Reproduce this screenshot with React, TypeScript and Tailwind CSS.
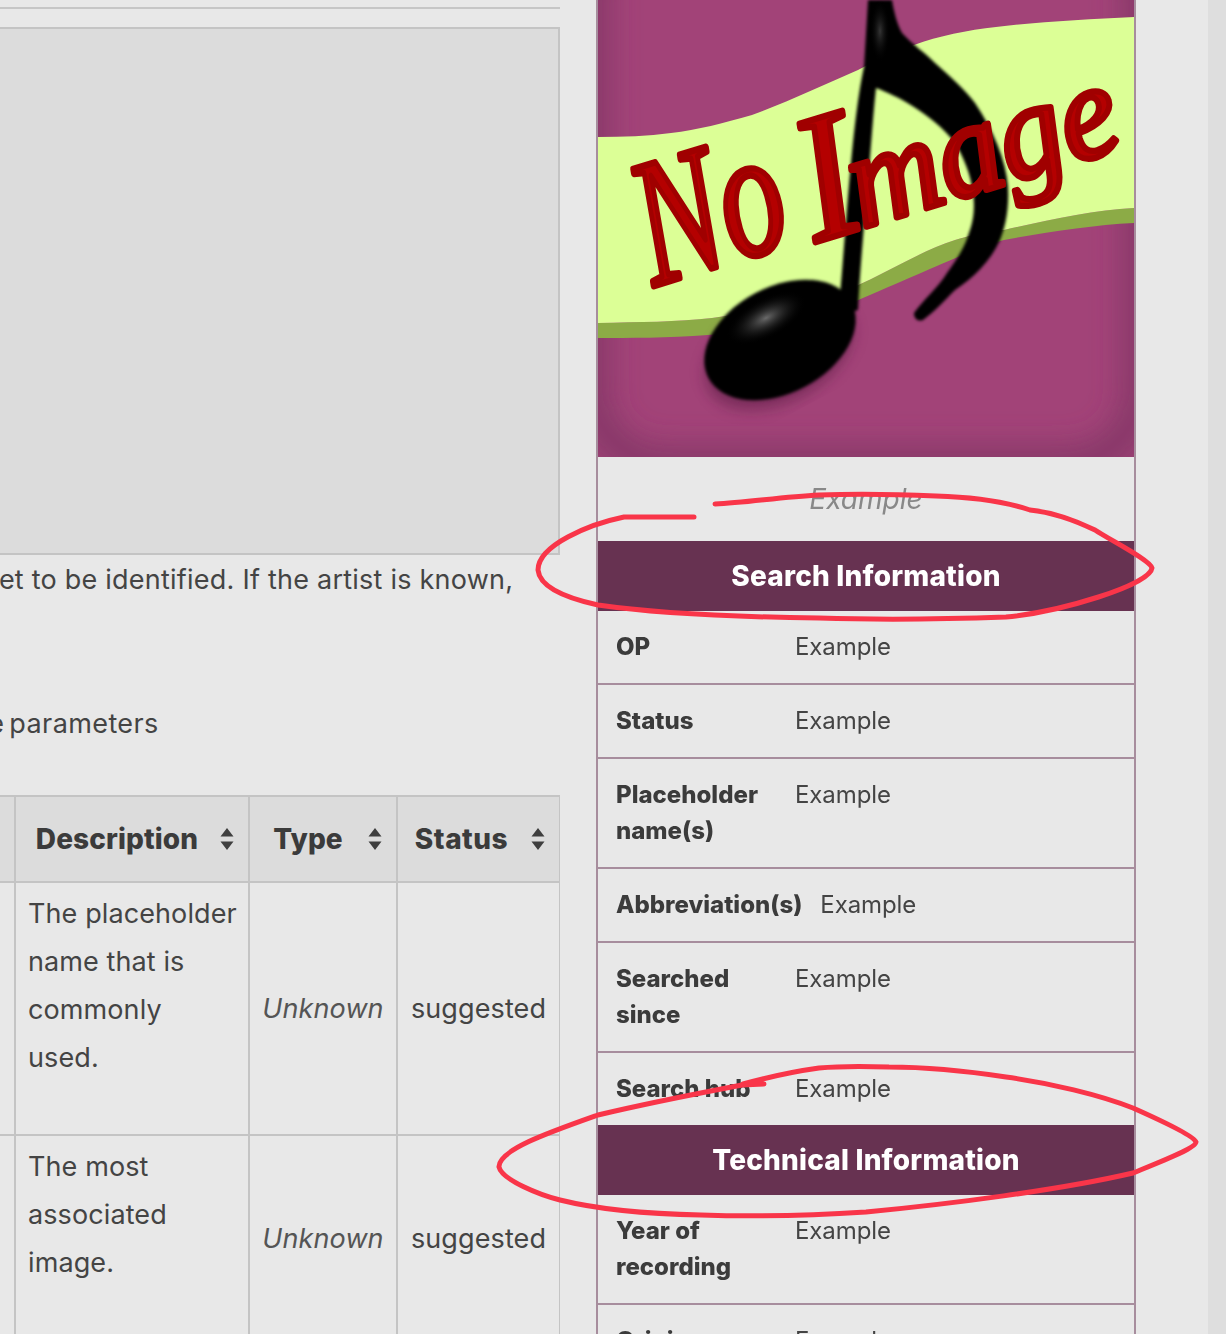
import React from 'react';

const bodyFont = "font-['Inter','Noto_Sans',sans-serif]";

const SortIcon = () => (
  <svg className="absolute right-[14px] top-[30px]" width="14" height="24" viewBox="0 0 14 24">
    <path d="M7 1 L13.5 9.5 H0.5 Z M7 23 L0.5 14.5 H13.5 Z" fill="#3f3f3f" />
  </svg>
);

const NoImage = () => (
  <svg width="536" height="457" viewBox="0 0 536 457" className="block">
    <defs>
      <radialGradient id="shine" cx="50%" cy="50%" r="50%">
        <stop offset="0%" stopColor="#6a6a6a" />
        <stop offset="100%" stopColor="#000000" stopOpacity="0" />
      </radialGradient>
      <filter id="soft"><feGaussianBlur stdDeviation="1.5" /></filter>
      <filter id="shadow"><feGaussianBlur stdDeviation="7" /></filter>
      <filter id="edge"><feGaussianBlur stdDeviation="16" /></filter>
    </defs>
    <rect width="536" height="457" fill="#a24378" />
    <rect x="-6" y="-85" width="548" height="548" rx="70" stroke="#7e3664" strokeWidth="26" fill="none" filter="url(#edge)" />
    <path d="M0 323 C40 322 80 322 114 318 C170 310 215 305 256 287 C290 272 325 250 357 240 C385 232 400 230 406 230 C450 220 495 210 536 208 V223 C495 225 450 232 406 240 C385 245 330 270 256 302 C210 320 160 332 110 335 C70 338 30 338 0 338 Z" fill="#8cab46" />
    <path d="M0 137 C25 137 50 136 73 133 C100 130 125 123 154 115 C190 102 225 85 260 70 C280 60 295 52 316 45 C340 36 370 30 398 27 C440 22 490 19 536 17 V208 C495 210 450 220 406 230 C400 230 385 232 357 240 C325 250 290 272 256 287 C215 305 170 310 114 318 C80 322 40 322 0 323 Z" fill="#dcff96" />
    <ellipse cx="181" cy="352" rx="80" ry="50" transform="rotate(-28 181 352)" fill="#5b1f45" opacity="0.55" filter="url(#shadow)" />
    <g filter="url(#soft)">
      <path d="M270 0 H294 C296 12 299 24 304 33 C315 45 326 52 337 63 C352 76 367 90 377 103 C395 130 408 160 410 187 C411 208 408 225 402 240 C392 262 375 278 357 290 C346 301 336 312 325 320 C320 322 316 319 316 313 C325 300 340 288 349 273 C360 258 367 246 371 233 C376 220 377 206 375 193 C373 175 366 158 357 143 C345 127 330 116 316 107 C302 98 289 92 278 88 C274 125 272 165 268 200 C265 240 262 270 260 310 L240 315 C246 270 252 130 266 67 Z" fill="#050505" />
      <ellipse cx="182" cy="340" rx="81" ry="53" transform="rotate(-28 182 340)" fill="#020202" />
    </g>
    <ellipse cx="168" cy="318" rx="44" ry="20" transform="rotate(-28 168 318)" fill="url(#shine)" />
    <rect x="272" y="0" width="20" height="62" fill="url(#shine)" opacity="0.5" />
    <g fontFamily="'Liberation Serif', serif" fontStyle="italic" fill="#b40000" stroke="#a00000" strokeWidth="5.5" strokeLinejoin="round">
      <text transform="translate(56 286) rotate(-17) scale(0.85 1.2)" fontSize="150">No</text>
      <text transform="translate(218 242) rotate(-17) scale(1.08 1.14)">
        <tspan fontSize="158">I</tspan>
        <tspan fontSize="118" dx="-8">mage</tspan>
      </text>
    </g>
  </svg>
);

const InfoRow = ({ label, auto, last }: { label: string; auto?: boolean; last?: boolean }) => (
  <div className={`flex py-[18px] text-[24px] leading-[36px] ${last ? '' : 'border-b-2 border-[#a78d9d]'}`}>
    <div className={`pl-[18px] pr-[18px] shrink-0 font-extrabold text-[#3b3b3b] ${auto ? '' : 'w-[197px]'}`}>{label}</div>
    <div className="text-[#444444] tracking-[-0.1px]">Example</div>
  </div>
);

const Title = ({ children }: { children: React.ReactNode }) => (
  <div className="h-[70px] bg-[#673251] flex items-center justify-center text-white font-extrabold tracking-[0.2px] text-[28px]">{children}</div>
);

export default function App() {
  return (
    <div className={`relative h-[1334px] w-[1226px] overflow-hidden bg-[#e8e8e8] flex ${bodyFont}`}>
      {/* left column, runs off the left side of the shot */}
      <div className="w-[560px] shrink-0 overflow-hidden pt-[7px]">
        <div className="h-[2px] bg-[#c6c6c6]" />
        <div className="mt-[18px] h-[528px] -ml-[4px] border-2 border-[#c4c4c4] bg-[#dcdcdc]" />
        <p className="mt-[1px] -ml-[16px] whitespace-nowrap text-[27px] leading-[48px] tracking-[0.23px] text-[#444444]">yet to be identified. If the artist is known,</p>
        <p className="mt-[96px] -ml-[46px] whitespace-nowrap text-[27px] leading-[48px] tracking-[0.4px] [word-spacing:-3px] text-[#444444]">The parameters</p>
        <table className="mt-[47px] -ml-[101px] w-[660px] table-fixed border-collapse text-[27px] leading-[48px] tracking-[0.1px] text-[#444444]">
          <colgroup>
            <col className="w-[115px]" />
            <col className="w-[234px]" />
            <col className="w-[148px]" />
            <col className="w-[163px]" />
          </colgroup>
          <thead>
            <tr className="h-[86px] bg-[#dcdcdc] text-[#3b3b3b] text-[28px]">
              <th className="border-2 border-[#c4c4c4]" />
              <th className="relative border-2 border-[#c4c4c4] pr-[30px] font-extrabold">Description<SortIcon /></th>
              <th className="relative border-2 border-[#c4c4c4] pr-[30px] font-extrabold">Type<SortIcon /></th>
              <th className="relative border-2 border-[#c4c4c4] pr-[34px] font-extrabold tracking-[0.5px]">Status<SortIcon /></th>
            </tr>
          </thead>
          <tbody>
            <tr className="h-[253px]">
              <td className="border-2 border-[#c4c4c4]" />
              <td className="border-2 border-[#c4c4c4] align-top pl-[12px] pt-[7px]">The placeholder<br />name that is<br />commonly<br />used.</td>
              <td className="border-2 border-[#c4c4c4] text-center italic text-[#555555]">Unknown</td>
              <td className="border-2 border-[#c4c4c4] text-center">suggested</td>
            </tr>
            <tr className="h-[208px]">
              <td className="border-2 border-[#c4c4c4]" />
              <td className="border-2 border-[#c4c4c4] align-top pl-[12px] pt-[7px]">The most<br />associated<br />image.</td>
              <td className="border-2 border-[#c4c4c4] text-center italic text-[#555555]">Unknown</td>
              <td className="border-2 border-[#c4c4c4] text-center">suggested</td>
            </tr>
          </tbody>
        </table>
      </div>

      {/* infobox */}
      <div className="ml-[36px] w-[540px] shrink-0 border-x-2 border-[#a78d9d]">
        <NoImage />
        <div className="h-[84px] flex items-center justify-center italic text-[28px] text-[#888888]">Example</div>
        <Title>Search Information</Title>
        <InfoRow label="OP" />
        <InfoRow label="Status" />
        <InfoRow label="Placeholder name(s)" />
        <InfoRow label="Abbreviation(s)" auto />
        <InfoRow label="Searched since" />
        <InfoRow label="Search hub" last />
        <Title>Technical Information</Title>
        <InfoRow label="Year of recording" />
        <InfoRow label="Origin" last />
      </div>

      {/* scrollbar */}
      <div className="ml-auto w-[18px] shrink-0 bg-[#dedede]" />

      {/* red pen marks drawn over the page */}
      <svg className="absolute left-0 top-0 pointer-events-none" width="1226" height="1334" viewBox="0 0 1226 1334" fill="none">
        <path d="M694 517 L624 517 C590 524 538 545 538 570 C540 590 575 600 598 605 C660 614 740 617 819 618 C880 620 950 619 1006 617 C1060 612 1150 585 1152 568 C1150 560 1110 540 1095 530 C1070 518 1050 512 1030 510 C1000 500 970 497 936 496 C890 494 850 494 819 495 C780 497 745 503 715 504" stroke="#f93549" strokeWidth="5" strokeLinecap="round" />
        <path d="M764 1084 L742 1085 C700 1093 640 1105 598 1115 C550 1132 498 1150 499 1167 C502 1180 540 1195 560 1200 C600 1210 650 1214 701 1215 C760 1217 820 1215 866 1212 C950 1204 1060 1190 1133 1173 C1165 1160 1196 1148 1196 1142 C1194 1136 1160 1120 1133 1108 C1100 1095 1050 1083 1006 1077 C960 1070 920 1067 889 1067 C860 1066 840 1066 819 1068 C790 1072 765 1078 743 1084" stroke="#f93549" strokeWidth="5" strokeLinecap="round" />
      </svg>
    </div>
  );
}
